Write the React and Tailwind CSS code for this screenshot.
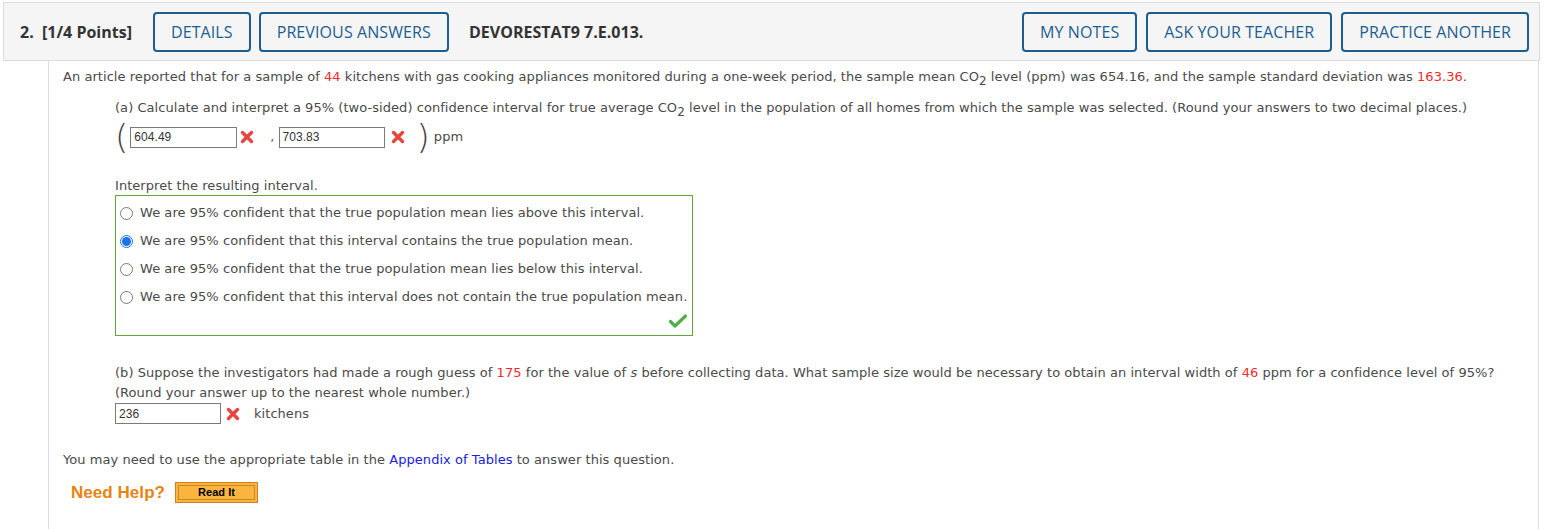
import React from 'react';

const HeaderButton = ({ label }) => (
  <button className="h-[40px] px-[16px] border-2 border-[#1c5e92] rounded-[4px] text-[#1c5e92] text-[16px] leading-none bg-transparent tracking-[0.1px]">
    {label}
  </button>
);

const RedX = () => (
  <svg width="14" height="14" viewBox="0 0 14 14" className="shrink-0">
    <path d="M2.5 2.5 L11.5 11.5 M11.5 2.5 L2.5 11.5" stroke="#e8453f" strokeWidth="3.4" strokeLinecap="round" />
  </svg>
);

const Answer = ({ value, width }) => (
  <div
    className="h-[21px] border border-[#7a7a7a] bg-white px-[3px] flex items-center text-[12px] text-[#333]"
    style={{ width }}
  >
    <span style={{ fontFamily: '"Liberation Sans", Arial, sans-serif' }}>{value}</span>
  </div>
);

const Radio = ({ checked }) =>
  checked ? (
    <span className="w-[13px] h-[13px] rounded-full border border-[#1a73e8] flex items-center justify-center shrink-0 bg-white">
      <span className="w-[9px] h-[9px] rounded-full bg-[#1a73e8]" />
    </span>
  ) : (
    <span className="w-[13px] h-[13px] rounded-full border border-[#7a7a7a] bg-white shrink-0" />
  );

const options = [
  { text: 'We are 95% confident that the true population mean lies above this interval.', checked: false },
  { text: 'We are 95% confident that this interval contains the true population mean.', checked: true },
  { text: 'We are 95% confident that the true population mean lies below this interval.', checked: false },
  { text: 'We are 95% confident that this interval does not contain the true population mean.', checked: false },
];

const Red = ({ children }) => <span className="text-[#f32b2b]">{children}</span>;

const CO2 = () => (
  <span>
    CO<sub className="text-[12px] relative top-[4px] align-baseline">2</sub>
  </span>
);

const Paren = ({ children }) => (
  <span
    className="text-[34px] leading-none text-[#444] font-extralight"
    style={{ fontFamily: '"DejaVu Sans", sans-serif' }}
  >
    {children}
  </span>
);

export default function App() {
  return (
    <div className="w-[1544px] h-[529px] bg-white overflow-hidden pt-[2px] pl-[3px] pr-[4px]">
      {/* cabecera de la pregunta */}
      <div
        className="h-[59px] bg-[#f5f5f5] border border-[#dcdcdc] flex items-center pl-[16px] pr-[10px]"
        style={{ fontFamily: '"Open Sans", sans-serif' }}
      >
        <span className="text-[16px] font-bold text-[#333] mr-[21px]">2.&nbsp; [1/4 Points]</span>
        <div className="flex gap-[8px]">
          <HeaderButton label="DETAILS" />
          <HeaderButton label="PREVIOUS ANSWERS" />
        </div>
        <span className="ml-[20px] text-[16px] font-bold text-[#333]">DEVORESTAT9 7.E.013.</span>
        <div className="ml-auto flex gap-[9px]">
          <HeaderButton label="MY NOTES" />
          <HeaderButton label="ASK YOUR TEACHER" />
          <HeaderButton label="PRACTICE ANOTHER" />
        </div>
      </div>

      {/* cuerpo */}
      <div
        className="ml-[45px] mr-[1px] h-[470px] border-l border-r border-[#dcdcdc] pl-[14px] pt-[7px] text-[13px] text-[#4a4a4a] tracking-[0.05px]"
        style={{ fontFamily: 'Verdana, "DejaVu Sans", sans-serif' }}
      >
        <p className="leading-[18px]">
          An article reported that for a sample of <Red>44</Red> kitchens with gas cooking appliances monitored during a
          one-week period, the sample mean <CO2 /> level (ppm) was 654.16, and the sample standard deviation was{' '}
          <Red>163.36</Red>.
        </p>

        <div className="pl-[52px]">
          <p className="leading-[18px] mt-[13px]">
            (a) Calculate and interpret a 95% (two-sided) confidence interval for true average <CO2 /> level in the
            population of all homes from which the sample was selected. (Round your answers to two decimal places.)
          </p>

          <div className="flex items-center h-[30px] mt-[5px]">
            <Paren>(</Paren>
            <span className="ml-[2px]"><Answer value="604.49" width={107} /></span>
            <span className="ml-[3px]"><RedX /></span>
            <span className="ml-[16px] text-[#666]">,</span>
            <span className="ml-[4px]"><Answer value="703.83" width={106} /></span>
            <span className="ml-[6px]"><RedX /></span>
            <span className="ml-[12px]"><Paren>)</Paren></span>
            <span className="ml-[4px]">ppm</span>
          </div>

          <p className="leading-[18px] mt-[25px]">Interpret the resulting interval.</p>

          <div className="w-[578px] h-[141px] border border-[#63a53c] pl-[4px] pt-[3px] relative">
            {options.map((o) => (
              <div key={o.text} className="flex items-center gap-[7px] h-[28px]">
                <Radio checked={o.checked} />
                <span>{o.text}</span>
              </div>
            ))}
            <svg width="18" height="14" viewBox="0 0 18 14" className="absolute right-[5px] bottom-[7px]">
              <path d="M1.5 7.5 L6 12 L16.5 2" fill="none" stroke="#4fae4a" strokeWidth="3.2" strokeLinejoin="round" strokeLinecap="round" />
            </svg>
          </div>

          <p className="leading-[20px] mt-[27px]">
            (b) Suppose the investigators had made a rough guess of <Red>175</Red> for the value of <i>s</i> before
            collecting data. What sample size would be necessary to obtain an interval width of <Red>46</Red> ppm for a
            confidence level of 95%?
            <br />
            (Round your answer up to the nearest whole number.)
          </p>
          <div className="flex items-center mt-[0px]">
            <Answer value="236" width={106} />
            <span className="ml-[5px]"><RedX /></span>
            <span className="ml-[14px]">kitchens</span>
          </div>
        </div>

        <p className="leading-[18px] mt-[27px]">
          You may need to use the appropriate table in the <span className="text-[#2020d8]">Appendix of Tables</span> to
          answer this question.
        </p>

        <div className="flex items-center mt-[11px] pl-[8px]" style={{ fontFamily: '"Liberation Sans", Arial, sans-serif' }}>
          <span className="text-[17px] font-bold text-[#e88411]">Need Help?</span>
          <button className="ml-[10px] w-[83px] h-[21px] bg-[#fbb43c] border border-[#d0801f] p-[2px]">
            <span className="flex items-center justify-center w-full h-full border border-[#c9872e] text-[11px] font-bold text-black leading-none">
              Read It
            </span>
          </button>
        </div>
      </div>
    </div>
  );
}
